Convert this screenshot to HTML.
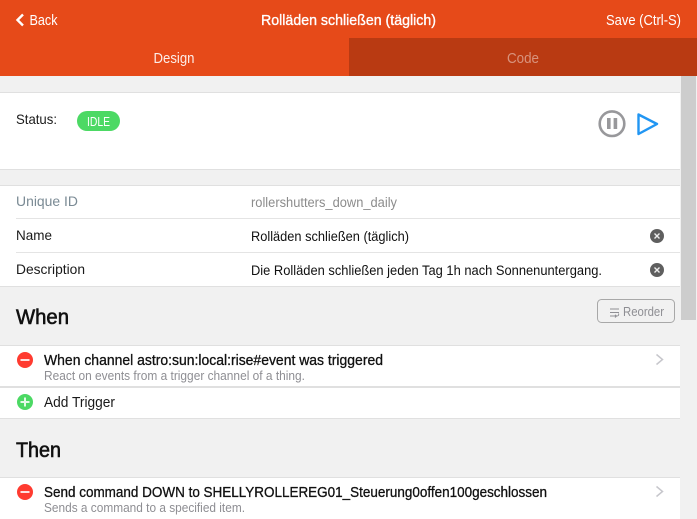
<!DOCTYPE html>
<html><head><meta charset="utf-8"><style>
html,body{margin:0;padding:0;width:697px;height:519px;overflow:hidden;background:#f1f1f1}
svg{display:block}
text{font-family:"Liberation Sans",sans-serif;white-space:pre}
</style></head><body>
<svg width="697" height="519" viewBox="0 0 697 519" xmlns="http://www.w3.org/2000/svg">
<rect width="697" height="519" fill="#f1f1f1"/>
<rect width="697" height="76" fill="#e64a19"/>
<rect x="349" y="38" width="348" height="38" fill="#b93a12"/>
<path d="M23 14.5 L17.5 20 L23 25.5" fill="none" stroke="#fff" stroke-width="2.4"/>
<text x="29.5" y="25" font-size="15" fill="#fff" textLength="28" lengthAdjust="spacingAndGlyphs">Back</text>
<text x="261" y="25" font-size="15" fill="#fff" stroke="#fff" stroke-width=".35" textLength="175" lengthAdjust="spacingAndGlyphs">Rolläden schließen (täglich)</text>
<text x="606" y="25" font-size="15" fill="#fff" textLength="75" lengthAdjust="spacingAndGlyphs">Save (Ctrl-S)</text>
<text x="153.5" y="63" font-size="15" fill="#fff" fill-opacity=".9" textLength="41" lengthAdjust="spacingAndGlyphs">Design</text>
<text x="507" y="63" font-size="15" fill="#fff" fill-opacity=".45" textLength="32" lengthAdjust="spacingAndGlyphs">Code</text>

<rect x="681" y="76" width="16" height="443" fill="#f1f1f1"/>
<rect x="681" y="76" width="15" height="244" fill="#cdcdcd"/>

<rect x="0" y="92" width="680" height="78" fill="#e0e0e0"/>
<rect x="0" y="93" width="680" height="76" fill="#fff"/>
<text x="16" y="124" font-size="14" fill="#1a1a1a" textLength="41" lengthAdjust="spacingAndGlyphs">Status:</text>
<rect x="77" y="111" width="43" height="20" rx="10" fill="#4cd964"/>
<text x="87" y="126" font-size="13" fill="#fff" textLength="23" lengthAdjust="spacingAndGlyphs">IDLE</text>
<circle cx="612" cy="123.7" r="12.3" fill="none" stroke="#98989b" stroke-width="2.6"/>
<rect x="607" y="118" width="3.6" height="11" fill="#98989b"/>
<rect x="613.6" y="118" width="3.6" height="11" fill="#98989b"/>
<path d="M638.5 114.5 L657 124 L638.5 134 Z" fill="none" stroke="#2196f3" stroke-width="2.4" stroke-linejoin="round"/>

<rect x="0" y="185" width="680" height="102" fill="#e0e0e0"/>
<rect x="0" y="186" width="680" height="100" fill="#fff"/>
<rect x="16" y="218" width="664" height="1" fill="#e4e4e4"/>
<rect x="16" y="252" width="664" height="1" fill="#e4e4e4"/>
<text x="16" y="206" font-size="14" fill="#7a8a94" textLength="62" lengthAdjust="spacingAndGlyphs">Unique ID</text>
<text x="251" y="207" font-size="13.5" fill="#8c8c8c" textLength="146" lengthAdjust="spacingAndGlyphs">rollershutters_down_daily</text>
<text x="16" y="240" font-size="14" fill="#1a1a1a" textLength="36" lengthAdjust="spacingAndGlyphs">Name</text>
<text x="251" y="241" font-size="13.5" fill="#111" textLength="158" lengthAdjust="spacingAndGlyphs">Rolläden schließen (täglich)</text>
<text x="16" y="274" font-size="14" fill="#1a1a1a" textLength="69" lengthAdjust="spacingAndGlyphs">Description</text>
<text x="251" y="275" font-size="13.5" fill="#111" textLength="351" lengthAdjust="spacingAndGlyphs">Die Rolläden schließen jeden Tag 1h nach Sonnenuntergang.</text>
<g>
<circle cx="657" cy="236" r="7" fill="#5f5f5f"/>
<path d="M654.5 233.5 L659.5 238.5 M659.5 233.5 L654.5 238.5" stroke="#eee" stroke-width="1.4"/>
<circle cx="657" cy="270" r="7" fill="#5f5f5f"/>
<path d="M654.5 267.5 L659.5 272.5 M659.5 267.5 L654.5 272.5" stroke="#eee" stroke-width="1.4"/>
</g>

<text x="16" y="324" font-size="21" fill="#111" stroke="#111" stroke-width=".6" textLength="53" lengthAdjust="spacingAndGlyphs">When</text>
<rect x="597.5" y="299.5" width="77" height="23" rx="4" fill="none" stroke="#a8a8a8"/>
<path d="M610 309 H619 M610 312.5 H619 M610 316 H616.5 M618.5 313.5 Q619.5 316 616.5 316 M616.5 316 L615 314.8 M616.5 316 L615 317.5" fill="none" stroke="#8e8e93" stroke-width="1"/>
<text x="623" y="316" font-size="13" fill="#8e8e93" textLength="41" lengthAdjust="spacingAndGlyphs">Reorder</text>

<rect x="0" y="345" width="680" height="74" fill="#e0e0e0"/>
<rect x="0" y="346" width="680" height="40" fill="#fff"/>
<rect x="0" y="388" width="680" height="30" fill="#fff"/>
<circle cx="25" cy="360" r="8" fill="#ff3b30"/>
<rect x="20.5" y="359" width="9" height="2" fill="#fff" fill-opacity=".85"/>
<text x="44" y="365" font-size="14.5" fill="#111" stroke="#111" stroke-width=".3" textLength="339" lengthAdjust="spacingAndGlyphs">When channel astro:sun:local:rise#event was triggered</text>
<text x="44" y="380" font-size="12.5" fill="#8e8e93" textLength="261" lengthAdjust="spacingAndGlyphs">React on events from a trigger channel of a thing.</text>
<path d="M656.5 354.5 L662.5 359.5 L656.5 364.5" fill="none" stroke="#c7c7cc" stroke-width="1.5"/>
<circle cx="25" cy="402" r="8" fill="#4cd964"/>
<path d="M20.5 402 H29.5 M25 397.5 V406.5" stroke="#fff" stroke-opacity=".85" stroke-width="2"/>
<text x="44" y="407" font-size="14.5" fill="#1a1a1a" textLength="71" lengthAdjust="spacingAndGlyphs">Add Trigger</text>

<text x="16" y="457" font-size="21" fill="#111" stroke="#111" stroke-width=".6" textLength="45" lengthAdjust="spacingAndGlyphs">Then</text>

<rect x="0" y="477" width="680" height="42" fill="#e0e0e0"/>
<rect x="0" y="478" width="680" height="41" fill="#fff"/>
<circle cx="25" cy="492" r="8" fill="#ff3b30"/>
<rect x="20.5" y="491" width="9" height="2" fill="#fff" fill-opacity=".85"/>
<text x="44" y="497" font-size="14.5" fill="#111" stroke="#111" stroke-width=".3" textLength="503" lengthAdjust="spacingAndGlyphs">Send command DOWN to SHELLYROLLEREG01_Steuerung0offen100geschlossen</text>
<text x="44" y="512" font-size="12.5" fill="#8e8e93" textLength="201" lengthAdjust="spacingAndGlyphs">Sends a command to a specified item.</text>
<path d="M656.5 486.5 L662.5 491.5 L656.5 496.5" fill="none" stroke="#c7c7cc" stroke-width="1.5"/>
</svg>
</body></html>
